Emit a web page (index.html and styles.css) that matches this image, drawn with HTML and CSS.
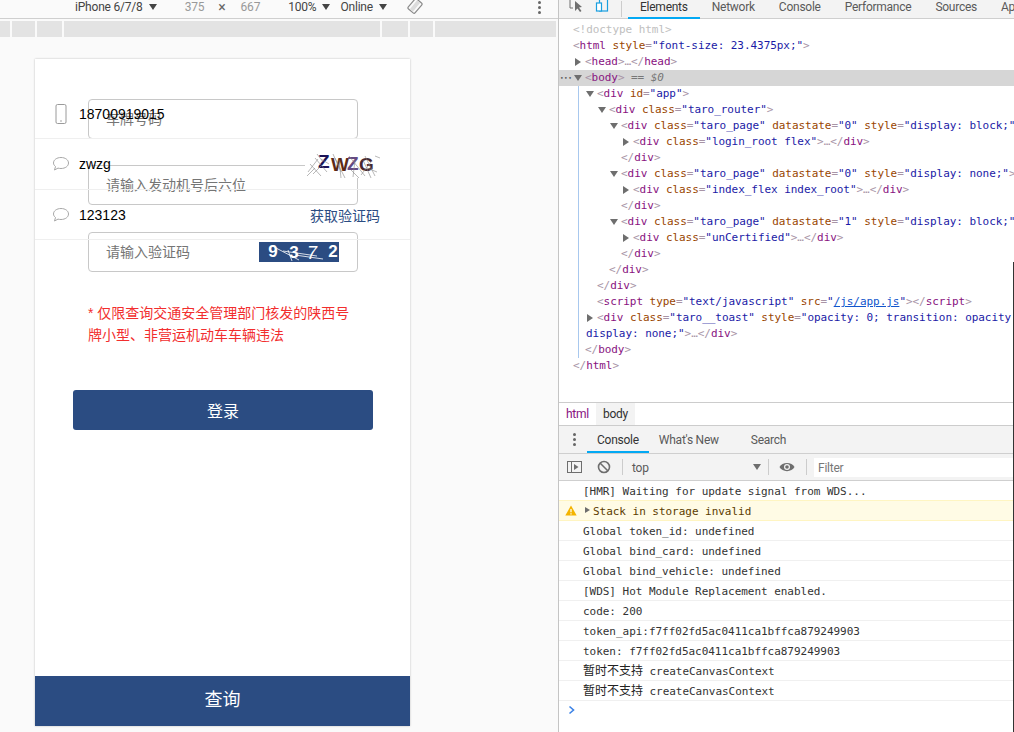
FILE: index.html
```html
<!DOCTYPE html>
<html lang="en">
<head>
    <meta charset="UTF-8">
    <meta name="viewport" content="width=device-width, initial-scale=1.0">
    <title>Taro login - device mode</title>
    <link rel="stylesheet" href="styles.css">
</head>
<body>
    <div class="emulator">
        <div class="device-bar">
            <span class="device-name">iPhone 6/7/8</span><span class="caret"></span>
            <span class="size first">375</span>
            <span class="times">×</span>
            <span class="size">667</span>
            <span class="zoom-level">100%</span><span class="caret"></span>
            <span class="network">Online</span><span class="caret"></span>
            <svg class="rotate" width="16" height="16" viewBox="0 0 16 16"><path d="M3 11 L10 2.5 L13 5 L6 13.5Z" fill="#dcdcdc"/><rect x="3.5" y="1.5" width="9" height="13" rx="1.5" transform="rotate(40 8 8)" fill="none" stroke="#8a8a8a" stroke-width="1.2"/></svg>
            <span class="more-dots"><i></i><i></i><i></i></span>
        </div>
        <div class="ruler">
            <span class="seg s1"></span><span class="seg s2"></span><span class="seg s3"></span><span class="seg s4"></span><span class="seg s5"></span><span class="seg s6"></span><span class="seg s7"></span>
        </div>
        <div class="phone">
            <div class="query-form">
                <div class="field"><input class="text-input" placeholder="车牌号码"></div>
                <div class="field"><input class="text-input" placeholder="请输入发动机号后六位"></div>
                <div class="field">
                    <input class="text-input" placeholder="请输入验证码">
                    <svg class="code-blue" width="80" height="20" viewBox="0 0 80 20">
                        <rect width="80" height="20" fill="#2b4c82"/>
                        <text x="14" y="15" class="code-digit">9</text>
                        <text x="35" y="16" class="code-digit">3</text>
                        <text x="53" y="17" class="code-digit thin">7</text>
                        <text x="74" y="15" class="code-digit">2</text>
                        <path d="M17 6 L40 18 M24 9 L58 14 M29 8 L33 19 M36 13 L64 17" stroke="#fff" stroke-width="0.8" fill="none"/>
                    </svg>
                </div>
                <p class="notice">* 仅限查询交通安全管理部门核发的陕西号牌小型、非营运机动车车辆违法</p>
                <button class="btn-query">登录</button>
            </div>

            <div class="login-form">
                <div class="login-row">
                    <svg class="row-icon" width="16" height="22" viewBox="0 0 16 22"><rect x="3" y="1.5" width="10" height="19" rx="1.5" fill="none" stroke="#9a9a9a"/><circle cx="8" cy="18" r="0.8" fill="#9a9a9a"/></svg>
                    <span class="row-value">18700919015</span>
                </div>
                <div class="login-row">
                    <svg class="row-icon" width="16" height="22" viewBox="0 0 16 22"><path d="M8 4.5 C12.2 4.5 15.5 6.8 15.5 10 C15.5 13.2 12.2 15.5 8 15.5 C7 15.5 6 15.4 5 15.1 L1.5 17 L2.5 13.5 C1.2 12.5 0.5 11.3 0.5 10 C0.5 6.8 3.8 4.5 8 4.5Z" fill="none" stroke="#a8a8a8"/></svg>
                    <span class="row-value">zwzg</span>
                    <svg class="code-white" width="75" height="28" viewBox="0 0 75 28">
                        <rect width="75" height="28" fill="#fff"/>
                        <text x="13" y="18" class="code-letter navy">Z</text>
                        <text x="26" y="21" class="code-letter brown">W</text>
                        <text x="42" y="20" class="code-letter violet">Z</text>
                        <text x="54" y="21" class="code-letter plum">G</text>
                        <path d="M3 22 L13 9 M5 14 L16 26 M10 8 L22 22 M8 24 L16 16 M12 4 L18 12 M2 26 L10 18 M16 9 L24 14 M30 8 L40 28 M34 10 L36 28 M28 4 L36 22 M44 6 L60 26 M50 10 L48 27 M46 20 L54 28 M60 6 L70 26 M66 12 L56 25 M70 6 L75 8 M62 18 L72 22 M58 10 L66 28" stroke="#888" stroke-width="0.6" fill="none"/>
                    </svg>
                </div>
                <div class="login-row">
                    <svg class="row-icon" width="16" height="22" viewBox="0 0 16 22"><path d="M8 4.5 C12.2 4.5 15.5 6.8 15.5 10 C15.5 13.2 12.2 15.5 8 15.5 C7 15.5 6 15.4 5 15.1 L1.5 17 L2.5 13.5 C1.2 12.5 0.5 11.3 0.5 10 C0.5 6.8 3.8 4.5 8 4.5Z" fill="none" stroke="#a8a8a8"/></svg>
                    <span class="row-value">123123</span>
                    <span class="get-code">获取验证码</span>
                </div>
            </div>

            <div class="tab-bottom">查询</div>
        </div>
    </div>

    <div class="devtools">
        <div class="tabbar">
            <svg class="tool-icon inspect" width="16" height="16" viewBox="0 0 16 16"><path d="M6 2 H2 V11 H5" fill="none" stroke="#6e6e6e"/><path d="M7 4 L7 14 L9.5 11.5 L12 15 L13.5 14 L11 10.5 L14 10Z" fill="#6e6e6e"/></svg>
            <svg class="tool-icon device" width="16" height="16" viewBox="0 0 16 16"><rect x="4.5" y="1" width="8" height="13" fill="none" stroke="#1a9fe0" stroke-width="1.2"/><rect x="1.5" y="6" width="5" height="8" fill="#fff" stroke="#1a9fe0" stroke-width="1.2"/></svg>
            <span class="sep"></span>
            <span class="tab active">Elements</span>
            <span class="tab">Network</span>
            <span class="tab">Console</span>
            <span class="tab">Performance</span>
            <span class="tab">Sources</span>
            <span class="tab">Application</span>
        </div>

        <div class="dom-tree">
            <span class="guide"></span>
            <div class="line d0 doctype">&lt;!doctype html&gt;</div>
            <div class="line d0"><b>&lt;</b><u>html</u> <em>style</em>=<s>"font-size: 23.4375px;"</s><b>&gt;</b></div>
            <div class="line d1 closed"><b>&lt;</b><u>head</u><b>&gt;</b>…<b>&lt;/</b><u>head</u><b>&gt;</b></div>
            <div class="line d1 open selected"><span class="ellipsis">•••</span><b>&lt;</b><u>body</u><b>&gt;</b> <span class="eq">== <i>$0</i></span></div>
            <div class="line d2 open"><b>&lt;</b><u>div</u> <em>id</em>=<s>"app"</s><b>&gt;</b></div>
            <div class="line d3 open"><b>&lt;</b><u>div</u> <em>class</em>=<s>"taro_router"</s><b>&gt;</b></div>
            <div class="line d4 open"><b>&lt;</b><u>div</u> <em>class</em>=<s>"taro_page"</s> <em>datastate</em>=<s>"0"</s> <em>style</em>=<s>"display: block;"</s><b>&gt;</b></div>
            <div class="line d5 closed"><b>&lt;</b><u>div</u> <em>class</em>=<s>"login_root flex"</s><b>&gt;</b>…<b>&lt;/</b><u>div</u><b>&gt;</b></div>
            <div class="line d4"><b>&lt;/</b><u>div</u><b>&gt;</b></div>
            <div class="line d4 open"><b>&lt;</b><u>div</u> <em>class</em>=<s>"taro_page"</s> <em>datastate</em>=<s>"0"</s> <em>style</em>=<s>"display: none;"</s><b>&gt;</b></div>
            <div class="line d5 closed"><b>&lt;</b><u>div</u> <em>class</em>=<s>"index_flex index_root"</s><b>&gt;</b>…<b>&lt;/</b><u>div</u><b>&gt;</b></div>
            <div class="line d4"><b>&lt;/</b><u>div</u><b>&gt;</b></div>
            <div class="line d4 open"><b>&lt;</b><u>div</u> <em>class</em>=<s>"taro_page"</s> <em>datastate</em>=<s>"1"</s> <em>style</em>=<s>"display: block;"</s><b>&gt;</b></div>
            <div class="line d5 closed"><b>&lt;</b><u>div</u> <em>class</em>=<s>"unCertified"</s><b>&gt;</b>…<b>&lt;/</b><u>div</u><b>&gt;</b></div>
            <div class="line d4"><b>&lt;/</b><u>div</u><b>&gt;</b></div>
            <div class="line d3"><b>&lt;/</b><u>div</u><b>&gt;</b></div>
            <div class="line d2"><b>&lt;/</b><u>div</u><b>&gt;</b></div>
            <div class="line d2"><b>&lt;</b><u>script</u> <em>type</em>=<s>"text/javascript"</s> <em>src</em>=<s>"<a class="link">/js/app.js</a>"</s><b>&gt;&lt;/</b><u>script</u><b>&gt;</b></div>
            <div class="line d2 closed"><b>&lt;</b><u>div</u> <em>class</em>=<s>"taro__toast"</s> <em>style</em>=<s>"opacity: 0; transition: opacity 0.3s;</s></div>
            <div class="line wrapped"><s>display: none;"</s><b>&gt;</b>…<b>&lt;/</b><u>div</u><b>&gt;</b></div>
            <div class="line d1"><b>&lt;/</b><u>body</u><b>&gt;</b></div>
            <div class="line d0"><b>&lt;/</b><u>html</u><b>&gt;</b></div>
        </div>

        <div class="crumbs"><span class="crumb html">html</span><span class="crumb body-crumb">body</span></div>

        <div class="drawer-tabs">
            <span class="more-dots drawer"><i></i><i></i><i></i></span>
            <span class="drawer-tab active">Console</span>
            <span class="drawer-tab">What's New</span>
            <span class="drawer-tab search">Search</span>
        </div>

        <div class="console-bar">
            <svg width="16" height="14" viewBox="0 0 16 14" class="bar-icon first"><rect x="0.5" y="1.5" width="14" height="11" fill="none" stroke="#6e6e6e"/><path d="M4.5 1.5 V12.5" stroke="#6e6e6e"/><path d="M7 4 L11.5 7 L7 10Z" fill="#6e6e6e"/></svg>
            <svg width="14" height="14" viewBox="0 0 14 14" class="bar-icon"><circle cx="7" cy="7" r="5.5" fill="none" stroke="#6e6e6e" stroke-width="1.6"/><path d="M3 3 L11 11" stroke="#6e6e6e" stroke-width="1.6"/></svg>
            <span class="sep"></span>
            <span class="context">top</span>
            <span class="caret context-caret"></span>
            <span class="sep"></span>
            <svg width="16" height="12" viewBox="0 0 16 12" class="bar-icon eye"><path d="M0.5 6 C3 0.5 13 0.5 15.5 6 C13 11.5 3 11.5 0.5 6Z" fill="#6e6e6e"/><circle cx="8" cy="6" r="3" fill="#f3f3f3"/><circle cx="8" cy="6" r="1.8" fill="#6e6e6e"/></svg>
            <span class="sep"></span>
            <span class="filter">Filter</span>
        </div>

        <div class="messages">
            <div class="msg">[HMR] Waiting for update signal from WDS...</div>
            <div class="msg warn">
                <svg class="warn-icon" width="12" height="11" viewBox="0 0 12 11"><path d="M6 0.5 L11.7 10.5 H0.3Z" fill="#f4b400"/><path d="M6 4 V7.2 M6 8.2 V9.4" stroke="#fff" stroke-width="1.2"/></svg>
                <span class="warn-caret"></span>Stack in storage invalid
            </div>
            <div class="msg">Global token_id: undefined</div>
            <div class="msg">Global bind_card: undefined</div>
            <div class="msg">Global bind_vehicle: undefined</div>
            <div class="msg">[WDS] Hot Module Replacement enabled.</div>
            <div class="msg">code: 200</div>
            <div class="msg">token_api:f7ff02fd5ac0411ca1bffca879249903</div>
            <div class="msg">token: f7ff02fd5ac0411ca1bffca879249903</div>
            <div class="msg cjk-msg"><span class="cjk">暂时不支持</span> createCanvasContext</div>
            <div class="msg cjk-msg"><span class="cjk">暂时不支持</span> createCanvasContext</div>
            <div class="prompt"><svg width="8" height="10" viewBox="0 0 8 10"><path d="M1.5 1.5 L5.5 5 L1.5 8.5" fill="none" stroke="#3b82e6" stroke-width="1.6"/></svg></div>
        </div>
        <span class="edge"></span>
    </div>
</body>
</html>
```

FILE: styles.css
```css
* {
    box-sizing: border-box;
}

html, body {
    margin: 0;
    height: 100%;
}

body {
    display: flex;
    width: 1014px;
    height: 732px;
    overflow: hidden;
    background-color: #fff;
    font-family: "Liberation Sans", "Noto Sans CJK SC", sans-serif;
}

/* left side: device mode */
.emulator {
    width: 558px;
    flex: none;
    background-color: #fafafa;
    display: flex;
    flex-direction: column;
    height: 732px;
}

.device-bar {
    height: 19px;
    padding: 0 0 4px 75px;
    border-bottom: 1px solid #cfcfcf;
    display: flex;
    align-items: center;
    font-family: Roboto, sans-serif;
    font-size: 12px;
    letter-spacing: -0.2px;
    color: #444;
}

.caret {
    width: 0;
    height: 0;
    border-left: 4px solid transparent;
    border-right: 4px solid transparent;
    border-top: 6px solid #444;
    margin-left: 6px;
}

.size {
    color: #999;
}

.size.first {
    margin-left: 28px;
}

.times {
    color: #666;
    margin: 0 15px 0 14px;
    font-size: 14px;
}

.zoom-level {
    margin-left: 28px;
}

.network {
    margin-left: 10px;
}

.rotate {
    flex: none;
    margin-left: 20px;
    margin-top: -3px;
}

.more-dots {
    display: flex;
    flex-direction: column;
    gap: 2px;
}

.more-dots i {
    width: 3px;
    height: 3px;
    border-radius: 50%;
    background-color: #666;
}

.device-bar .more-dots {
    margin-left: auto;
    margin-right: 17px;
}

.ruler {
    height: 16px;
    margin-top: 2px;
    display: flex;
    gap: 2px;
    width: 556px;
}

.seg {
    background-color: #e3e3e3;
    height: 100%;
}

.s1 { width: 10px; }
.s2 { width: 23px; }
.s3 { width: 25px; }
.s4 { width: 316px; }
.s5 { width: 26px; }
.s6 { width: 23px; }
.s7 { flex: 1; }

.phone {
    width: 375px;
    height: 667px;
    margin: 22px 0 0 35px;
    background-color: #fff;
    box-shadow: 0 0 2px rgba(0, 0, 0, 0.25);
    position: relative;
    display: flex;
    flex-direction: column;
}

.query-form {
    padding: 40px 0 0 53px;
}

.field {
    width: 270px;
    height: 40px;
    margin-bottom: 26.4px;
    position: relative;
}

.text-input {
    width: 100%;
    height: 100%;
    border: 1px solid #c8c8c8;
    border-radius: 4px;
    background: transparent;
    padding: 0 17px;
    font-family: inherit;
    font-size: 14px;
    outline: none;
}

.code-blue {
    position: absolute;
    left: 171px;
    top: 10px;
}

.code-digit {
    fill: #fff;
    font-size: 17px;
    font-weight: bold;
    text-anchor: middle;
}

.code-digit.thin {
    font-size: 18px;
    font-weight: normal;
    font-style: italic;
}

.notice {
    margin: 30px 0 0;
    width: 270px;
    font-size: 14px;
    line-height: 22px;
    color: #f22e2e;
}

.btn-query {
    display: block;
    width: 300px;
    height: 40px;
    margin: 44px 0 0 -15px;
    border: none;
    border-radius: 3px;
    background-color: #2b4c82;
    color: #fff;
    font-family: inherit;
    font-size: 16px;
}

.login-form {
    position: absolute;
    left: 0;
    top: 30px;
    width: 100%;
}

.login-row {
    height: 50px;
    padding-left: 18px;
    border-bottom: 1px solid #efefef;
    display: flex;
    align-items: center;
    position: relative;
    font-size: 14px;
    color: #000;
}

.login-row:nth-child(2) {
    height: 51px;
}

.row-icon {
    flex: none;
}

.row-value {
    margin-left: 10px;
}

.code-white {
    position: absolute;
    left: 270px;
    top: 11px;
}

.code-letter {
    font-size: 19px;
    font-weight: bold;
}

.navy { fill: #1b1357; }
.brown { fill: #5b2a17; }
.violet { fill: #644a82; }
.plum { fill: #46272f; }

.get-code {
    margin-left: auto;
    margin-right: 30px;
    color: #2b4c82;
}

.tab-bottom {
    margin-top: auto;
    height: 50px;
    padding-bottom: 7px;
    background-color: #2b4c82;
    color: #fff;
    font-size: 18px;
    display: flex;
    align-items: center;
    justify-content: center;
}

/* right side: devtools */
.devtools {
    width: 456px;
    flex: none;
    height: 732px;
    border-left: 1px solid #c4c4c4;
    display: flex;
    flex-direction: column;
    position: relative;
    overflow: hidden;
    font-family: Roboto, sans-serif;
    font-size: 12px;
    letter-spacing: -0.25px;
}

.tabbar {
    height: 19px;
    background-color: #f3f3f3;
    border-bottom: 1px solid #cfcfcf;
    display: flex;
    align-items: center;
    color: #5a5a5a;
    white-space: nowrap;
}

.tool-icon {
    flex: none;
    margin-top: -8px;
}

.tool-icon.inspect {
    margin-left: 9px;
}

.tool-icon.device {
    margin-left: 11px;
}

.sep {
    width: 1px;
    height: 16px;
    background-color: #ccc;
    flex: none;
}

.tabbar .sep {
    margin: 0 6px 0 10px;
}

.tab {
    padding: 0 12px;
    height: 19px;
    line-height: 15px;
    flex: none;
}

.tab.active {
    color: #333;
    border-bottom: 2px solid #03a9f4;
}

.dom-tree {
    height: 383px;
    padding-top: 3px;
    position: relative;
    font-family: "DejaVu Sans Mono", monospace;
    font-size: 11px;
    letter-spacing: -0.05px;
    color: #a894a6;
    overflow: hidden;
}

.guide {
    position: absolute;
    left: 19px;
    top: 67px;
    width: 1px;
    height: 272px;
    background-color: #a8c8ee;
}

.line {
    height: 16px;
    line-height: 16px;
    white-space: nowrap;
    position: relative;
}

.line b { font-weight: normal; color: #a894a6; }
.line u { text-decoration: none; color: #881280; }
.line em { font-style: normal; color: #994500; }
.line s { text-decoration: none; color: #1a1aa6; }
.line .link { color: #1155cc; text-decoration: underline; }

.doctype { color: #c0c0c0; }

.d0 { padding-left: 14px; }
.d1 { padding-left: 26px; }
.d2 { padding-left: 38px; }
.d3 { padding-left: 50px; }
.d4 { padding-left: 62px; }
.d5 { padding-left: 74px; }
.wrapped { padding-left: 27px; }

.open::before {
    content: "";
    position: absolute;
    top: 5px;
    margin-left: -11px;
    border-left: 4px solid transparent;
    border-right: 4px solid transparent;
    border-top: 6px solid #6e6e6e;
}

.closed::before {
    content: "";
    position: absolute;
    top: 4px;
    margin-left: -10px;
    border-top: 4px solid transparent;
    border-bottom: 4px solid transparent;
    border-left: 6px solid #6e6e6e;
}

.selected {
    background-color: #d6d6d6;
}

.ellipsis {
    position: absolute;
    left: 1px;
    top: 0;
    font-size: 6px;
    color: #555;
    letter-spacing: 0.5px;
}

.eq {
    color: #777;
}

.crumbs {
    height: 24px;
    border-top: 1px solid #ccc;
    border-bottom: 1px solid #ccc;
    display: flex;
    color: #303030;
}

.crumb {
    padding: 0 7px;
    line-height: 23px;
}

.crumb.html {
    color: #881280;
}

.body-crumb {
    background-color: #f3f3f3;
}

.drawer-tabs {
    height: 28px;
    background-color: #f3f3f3;
    border-bottom: 1px solid #cfcfcf;
    display: flex;
    align-items: stretch;
    color: #5a5a5a;
}

.more-dots.drawer {
    margin: 7px 0 0 14px;
    width: 3px;
}

.drawer-tab {
    padding: 0 10px;
    line-height: 28px;
}

.drawer-tab.active {
    margin-left: 11px;
    color: #333;
    border-bottom: 2px solid #03a9f4;
}

.drawer-tab.search {
    margin-left: 12px;
}

.console-bar {
    height: 27px;
    background-color: #f3f3f3;
    border-bottom: 1px solid #cfcfcf;
    display: flex;
    align-items: center;
    color: #5a5a5a;
}

.bar-icon {
    flex: none;
    margin-left: 14px;
}

.bar-icon.first {
    margin-left: 8px;
}

.console-bar .sep {
    margin-left: 11px;
}

.context {
    margin-left: 9px;
    padding-top: 2px;
    width: 121px;
}

.context-caret {
    border-top-color: #6e6e6e;
    margin: 0;
}

.console-bar .context-caret + .sep {
    margin-left: 7px;
}

.bar-icon.eye {
    margin-left: 10px;
}

.filter {
    margin-left: 7px;
    padding: 4px 4px 2px;
    flex: 1;
    background-color: #fff;
    color: #777;
    line-height: 13px;
}

.messages {
    flex: 1;
    font-family: "DejaVu Sans Mono", "Noto Sans CJK SC", monospace;
    font-size: 11px;
    letter-spacing: -0.03px;
    color: #333;
}

.msg {
    height: 20px;
    line-height: 21px;
    padding-left: 24px;
    border-bottom: 1px solid #f0f0f0;
    white-space: nowrap;
    position: relative;
}

.msg.warn {
    background-color: #fffbe5;
    border-bottom-color: #fff5c2;
    border-top: 1px solid #fff5c2;
    margin-top: -1px;
    height: 21px;
    color: #5c3b00;
    padding-left: 34px;
}

.msg.cjk-msg {
    line-height: 17px;
}

.warn-icon {
    position: absolute;
    left: 6px;
    top: 4px;
}

.warn-caret {
    position: absolute;
    left: 26px;
    top: 6px;
    border-top: 3.5px solid transparent;
    border-bottom: 3.5px solid transparent;
    border-left: 5px solid #6e6e6e;
}

.cjk {
    font-family: "Noto Sans CJK SC", sans-serif;
    font-size: 12px;
    color: #222;
}

.prompt {
    padding: 4px 0 0 9px;
}

.edge {
    position: absolute;
    right: 0;
    top: 262px;
    width: 1px;
    height: 470px;
    background-color: #333;
}
```
